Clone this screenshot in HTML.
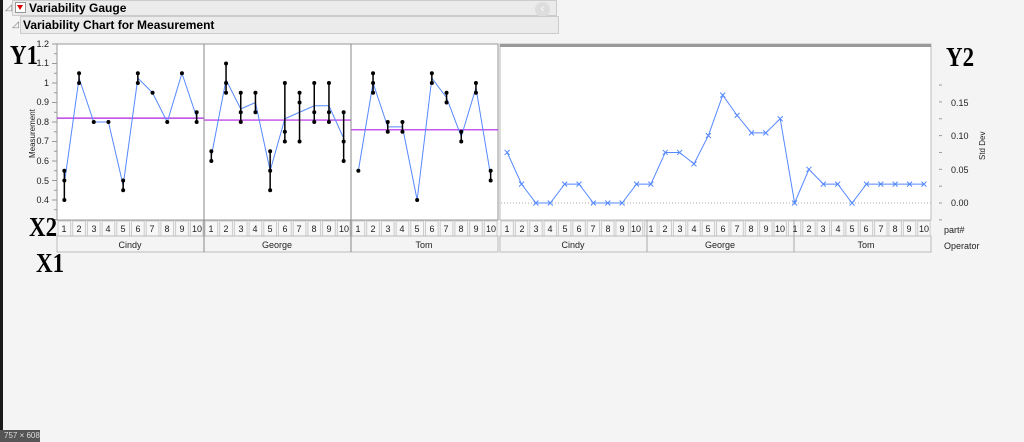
<!DOCTYPE html>
<html><head><meta charset="utf-8"><style>
body{margin:0;width:1024px;height:442px;background:#f4f4f4;overflow:hidden;position:relative;font-family:"Liberation Sans",sans-serif}
.hd{position:absolute;border:1px solid #ccc;background:#ebebeb;font-weight:bold;font-size:12px;line-height:14px;color:#000}
.big{position:absolute;font-family:"Liberation Serif",serif;font-weight:bold;font-size:27px;transform:scaleX(0.85);transform-origin:left top;color:#000;z-index:2}
</style></head><body>
<div style="position:absolute;left:0;top:0;width:3px;height:442px;background:#1a1a1a"></div>
<div style="position:absolute;left:5px;top:2px;font-size:9px;color:#777">◿</div>
<div class="hd" style="left:12px;top:0;width:543px;height:14px;">
 <span style="display:inline-block;width:9px;height:9px;background:#fff;border:1px solid #999;margin:1px 3px 0 2px;vertical-align:top;position:relative"><span style="position:absolute;left:1px;top:2px;border-left:3.5px solid transparent;border-right:3.5px solid transparent;border-top:5px solid #d00"></span></span>Variability Gauge</div>
<div style="position:absolute;left:535px;top:2px;width:15px;height:15px;border-radius:50%;background:#ddd;color:#fff;font-size:11px;text-align:center;line-height:15px">‹</div>
<div style="position:absolute;left:12px;top:19px;font-size:9px;color:#777">◿</div>
<div class="hd" style="left:20px;top:16px;width:535px;height:16px;line-height:16px;padding-left:2px">Variability Chart for Measurement</div>
<div class="big" style="left:10px;top:40px">Y1</div>
<div class="big" style="left:29px;top:212px">X2</div>
<div class="big" style="left:36px;top:248px">X1</div>
<div class="big" style="left:946px;top:42px">Y2</div>
<div style="position:absolute;left:0;top:430px;width:40px;height:12px;background:#555;color:#ddd;font-size:8px;line-height:12px;padding-left:4px;box-sizing:border-box">757 × 608</div>
<svg id="s" width="1024" height="442" style="position:absolute;left:0;top:0" font-family="Liberation Sans, sans-serif">
<rect x="57" y="44" width="441" height="176" fill="#fff" stroke="#999"/>
<rect x="500" y="44" width="431" height="176" fill="#fff" stroke="#bbb"/>
<rect x="500" y="44" width="431" height="3" fill="#999"/>
<line x1="501" y1="203" x2="931" y2="203" stroke="#aaa" stroke-dasharray="1,2"/>
<g id="g"></g>
<line x1="204" y1="44" x2="204" y2="220" stroke="#888"/>
<line x1="351" y1="44" x2="351" y2="220" stroke="#888"/>
<g font-size="9" fill="#222" text-anchor="end">
<text x="49" y="47">1.2</text><text x="49" y="66">1.1</text><text x="49" y="86">1</text><text x="49" y="105">0.9</text><text x="49" y="125">0.8</text><text x="49" y="144">0.7</text><text x="49" y="164">0.6</text><text x="49" y="184">0.5</text><text x="49" y="203">0.4</text>
</g>
<g font-size="9" fill="#222">
<text x="951" y="106">0.15</text><text x="951" y="139">0.10</text><text x="951" y="173">0.05</text><text x="951" y="206">0.00</text>
<text x="944" y="233">part#</text><text x="944" y="249">Operator</text>
<text x="130" y="248" text-anchor="middle">Cindy</text><text x="277" y="248" text-anchor="middle">George</text><text x="424" y="248" text-anchor="middle">Tom</text>
<text x="573" y="248" text-anchor="middle">Cindy</text><text x="720" y="248" text-anchor="middle">George</text><text x="866" y="248" text-anchor="middle">Tom</text>
<text transform="translate(35,158) rotate(-90)" font-size="8">Measurement</text>
<text transform="translate(985,160) rotate(-90)" font-size="8">Std Dev</text>
</g>
<g font-size="9" fill="#222" text-anchor="middle" id="t">
<text x="64" y="232">1</text><text x="79" y="232">2</text><text x="94" y="232">3</text><text x="108" y="232">4</text><text x="123" y="232">5</text><text x="138" y="232">6</text><text x="152" y="232">7</text><text x="167" y="232">8</text><text x="182" y="232">9</text><text x="197" y="232">10</text>
<text x="211" y="232">1</text><text x="226" y="232">2</text><text x="241" y="232">3</text><text x="255" y="232">4</text><text x="270" y="232">5</text><text x="285" y="232">6</text><text x="299" y="232">7</text><text x="314" y="232">8</text><text x="329" y="232">9</text><text x="344" y="232">10</text>
<text x="358" y="232">1</text><text x="373" y="232">2</text><text x="388" y="232">3</text><text x="402" y="232">4</text><text x="417" y="232">5</text><text x="432" y="232">6</text><text x="446" y="232">7</text><text x="461" y="232">8</text><text x="476" y="232">9</text><text x="491" y="232">10</text>
<text x="507" y="232">1</text><text x="522" y="232">2</text><text x="536" y="232">3</text><text x="550" y="232">4</text><text x="565" y="232">5</text><text x="579" y="232">6</text><text x="593" y="232">7</text><text x="608" y="232">8</text><text x="622" y="232">9</text><text x="636" y="232">10</text>
<text x="651" y="232">1</text><text x="665" y="232">2</text><text x="680" y="232">3</text><text x="694" y="232">4</text><text x="708" y="232">5</text><text x="723" y="232">6</text><text x="737" y="232">7</text><text x="751" y="232">8</text><text x="766" y="232">9</text><text x="780" y="232">10</text>
<text x="795" y="232">1</text><text x="809" y="232">2</text><text x="823" y="232">3</text><text x="838" y="232">4</text><text x="852" y="232">5</text><text x="866" y="232">6</text><text x="881" y="232">7</text><text x="895" y="232">8</text><text x="909" y="232">9</text><text x="924" y="232">10</text>
</g>
</svg>
<script>
var g=document.getElementById('g'),h='';
function Y(v){return 44+(1.2-v)*195}
function S(s){return 203-s*674}
for(var i=0;i<30;i++){var x=57+i*14.7;h+='<rect x="'+(x+1)+'" y="221" width="12.7" height="15" fill="#f7f7f7" stroke="#ccc"/>';}
for(var i=0;i<30;i++){var x=500+i*14.37;h+='<rect x="'+(x+1)+'" y="221" width="12.4" height="15" fill="#f7f7f7" stroke="#ccc"/>';}
h+='<rect x="57" y="236" width="441" height="16" fill="#f4f4f4" stroke="#bbb"/><rect x="500" y="236" width="431" height="16" fill="#f4f4f4" stroke="#bbb"/>';
h+='<line x1="204" y1="220" x2="204" y2="252" stroke="#888"/><line x1="351" y1="220" x2="351" y2="252" stroke="#888"/><line x1="647" y1="220" x2="647" y2="252" stroke="#aaa"/><line x1="794" y1="220" x2="794" y2="252" stroke="#aaa"/>';
for(var v=0.3;v<=1.21;v+=0.05){h+='<line x1="'+(Math.abs(v*10-Math.round(v*10))<.01?52:54)+'" y1="'+Y(v)+'" x2="57" y2="'+Y(v)+'" stroke="#999"/>';}
for(var s=-0.025;s<=0.18;s+=0.025){h+='<line x1="939" y1="'+S(s)+'" x2="942" y2="'+S(s)+'" stroke="#999"/>';}
var D=[[.4,.5,.55],[1,1.05],[.8],[.8],[.45,.5],[1,1.05],[.95],[.8],[1.05],[.8,.85],
[.6,.65],[.95,1,1.1],[.8,.85,.95],[.85,.95],[.45,.55,.65],[.7,.75,1],[.7,.9,.95],[.8,.85,1],[.8,.85,1],[.6,.7,.85],
[.55],[.95,1,1.05],[.75,.8],[.75,.8],[.4],[1,1.05],[.9,.95],[.7,.75],[.95,1],[.5,.55]];
var M=[.82,.81,.76];
for(var o=0;o<3;o++){var x0=57+o*147;h+='<line x1="'+x0+'" y1="'+Y(M[o])+'" x2="'+(x0+147)+'" y2="'+Y(M[o])+'" stroke="#b020e0" stroke-width="1.2"/>';
var p='';for(var i=0;i<10;i++){var d=D[o*10+i],m=d.reduce((a,b)=>a+b)/d.length;p+=(i?'L':'M')+(x0+7.35+i*14.7)+' '+Y(m);}
h+='<path d="'+p+'" fill="none" stroke="#5588ff" stroke-width="1"/>';}
for(var k=0;k<30;k++){var d=D[k],x=57+7.35+k*14.7,mn=Math.min(...d),mx=Math.max(...d);
if(mx>mn)h+='<line x1="'+x+'" y1="'+Y(mx)+'" x2="'+x+'" y2="'+Y(mn)+'" stroke="#000" stroke-width="1.5"/>';
d.forEach(v=>{h+='<circle cx="'+x+'" cy="'+Y(v)+'" r="2" fill="#000"/>';});}
var SD=[.075,.028,0,0,.028,.028,0,0,0,.028,.028,.075,.075,.058,.1,.16,.13,.104,.104,.125,0,.05,.028,.028,0,.028,.028,.028,.028,.028];
var p='';SD.forEach((s,i)=>{var x=500+7.18+i*14.37,y=S(s);p+=(i?'L':'M')+x+' '+y;h+='<path d="M'+(x-2.5)+' '+(y-2.5)+'L'+(x+2.5)+' '+(y+2.5)+'M'+(x+2.5)+' '+(y-2.5)+'L'+(x-2.5)+' '+(y+2.5)+'" stroke="#5588ff"/>';});
h+='<path d="'+p+'" fill="none" stroke="#5588ff"/>';
g.innerHTML=h;
</script>
</body></html>
